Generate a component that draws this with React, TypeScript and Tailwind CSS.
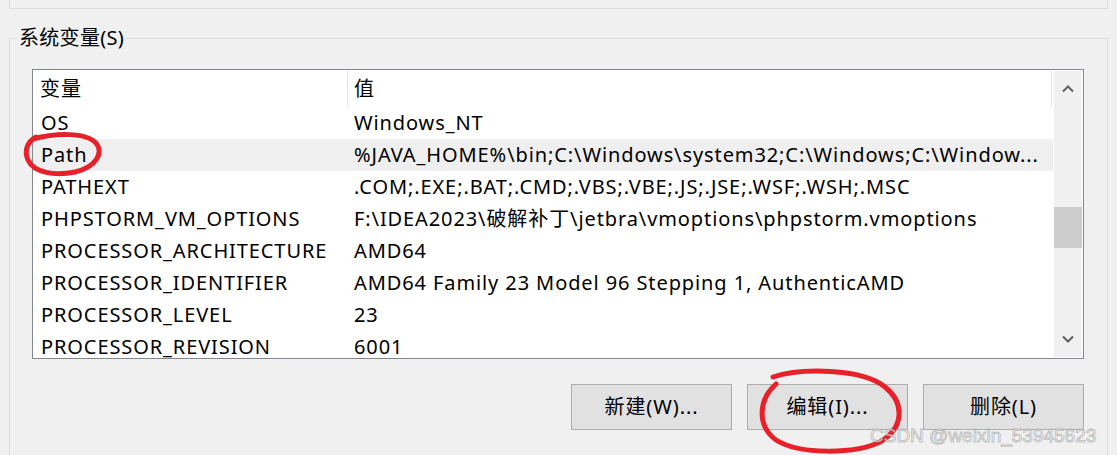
import React from "react";

const rows: { name: string; value: string; selected?: boolean }[] = [
  { name: "OS", value: "Windows_NT" },
  {
    name: "Path",
    value: "%JAVA_HOME%\\bin;C:\\Windows\\system32;C:\\Windows;C:\\Window...",
    selected: true,
  },
  { name: "PATHEXT", value: ".COM;.EXE;.BAT;.CMD;.VBS;.VBE;.JS;.JSE;.WSF;.WSH;.MSC" },
  { name: "PHPSTORM_VM_OPTIONS", value: "F:\\IDEA2023\\破解补丁\\jetbra\\vmoptions\\phpstorm.vmoptions" },
  { name: "PROCESSOR_ARCHITECTURE", value: "AMD64" },
  { name: "PROCESSOR_IDENTIFIER", value: "AMD64 Family 23 Model 96 Stepping 1, AuthenticAMD" },
  { name: "PROCESSOR_LEVEL", value: "23" },
  { name: "PROCESSOR_REVISION", value: "6001" },
];

const Chevron: React.FC<{ down?: boolean }> = ({ down }) => (
  <svg width="12" height="8" viewBox="0 0 12 8" className="block">
    <path
      d={down ? "M1 1.5 L6 6.5 L11 1.5" : "M1 6.5 L6 1.5 L11 6.5"}
      fill="none"
      stroke="#606060"
      strokeWidth="2"
    />
  </svg>
);

const WinButton: React.FC<{ label: string }> = ({ label }) => (
  <button className="w-[161px] h-[46px] border border-[#adadad] bg-[#e1e1e1] text-[20px] text-black flex items-center justify-center">
    {label}
  </button>
);

const App: React.FC = () => {
  return (
    <div className="relative w-[1117px] h-[455px] overflow-hidden bg-[#f0f0f0] text-black tracking-[0.9px] font-['Noto_Sans','Noto_Sans_CJK_SC',sans-serif]">
      {/* bottom of the user-variables group above */}
      <div className="ml-[9px] mr-[9px] h-[9px] border-l border-r border-b border-[#dcdcdc]" />

      {/* system variables group */}
      <div className="relative ml-[9px] mr-[9px] mt-[29px] h-[440px] border-l border-r border-t border-[#dcdcdc] pl-[22px] pr-[22px] pt-[30px]">
        <span className="absolute -top-[15px] left-[7px] bg-[#f0f0f0] px-[2px] text-[20px] leading-[28px] tracking-[0.3px]">
          系统变量(S)
        </span>

        <div className="flex h-[290px] w-[1052px] border border-[#828790] bg-white">
          <div className="w-[1020px] text-[20px]">
            <div className="flex h-[37px] items-center">
              <div className="flex h-full w-[315px] items-center border-r border-[#e5e5e5] pl-[7px]">变量</div>
              <div className="flex h-full w-[704px] items-center border-r border-[#e5e5e5] pl-[6px]">值</div>
            </div>
            {rows.map((r) => (
              <div
                key={r.name}
                className={`flex h-[32px] items-center ${r.selected ? "bg-[#efefef]" : ""}`}
              >
                <div className="w-[315px] whitespace-nowrap pl-[8px]">{r.name}</div>
                <div className="w-[705px] whitespace-nowrap pl-[6px]">{r.value}</div>
              </div>
            ))}
          </div>

          {/* scrollbar */}
          <div className="m-px flex w-[29px] flex-col items-center bg-[#f0f0f0]">
            <div className="flex h-[36px] items-center justify-center">
              <Chevron />
            </div>
            <div className="w-full flex-1 pt-[100px]">
              <div className="h-[41px] w-full bg-[#cdcdcd]" />
            </div>
            <div className="flex h-[36px] items-center justify-center">
              <Chevron down />
            </div>
          </div>
        </div>

        <div className="mt-[25px] flex w-[1052px] justify-end gap-[15px]">
          <WinButton label="新建(W)..." />
          <WinButton label="编辑(I)..." />
          <WinButton label="删除(L)" />
        </div>
      </div>

      {/* hand-drawn annotations */}
      <svg className="pointer-events-none absolute left-0 top-0" width="1117" height="455">
        <path
          d="M33 139 C 55 133, 86 132, 96 143 C 104 153, 96 167, 75 172 C 55 176, 34 173, 28 160 C 24 151, 27 142, 36 137"
          fill="none"
          stroke="#e8202a"
          strokeWidth="5"
          strokeLinecap="round"
        />
        <path
          d="M773 377 C 800 368, 862 368, 885 387 C 905 403, 904 428, 880 442 C 855 454, 800 455, 776 440 C 757 426, 758 400, 776 384"
          fill="none"
          stroke="#e8202a"
          strokeWidth="5"
          strokeLinecap="round"
        />
      </svg>

      <span className="pointer-events-none absolute left-[870px] top-[424px] whitespace-nowrap text-[19px] leading-[24px] tracking-normal font-['Liberation_Sans',Arial,sans-serif] text-white/70 [-webkit-text-stroke:1px_rgba(140,140,140,0.5)]">
        CSDN @weixin_53945623
      </span>
    </div>
  );
};

export default App;
